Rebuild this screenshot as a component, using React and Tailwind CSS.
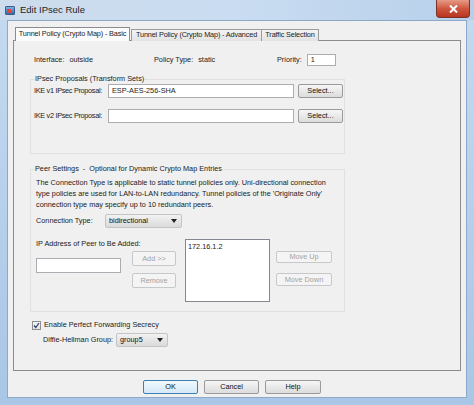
import React from "react";

function Btn({ children, w, h, disabled, def }) {
  return (
    <div
      className={
        "flex items-center justify-center rounded-[2px] border leading-none " +
        (disabled
          ? "border-[#c6c8ca] bg-[#f4f4f4] text-[#a3a3a3] "
          : def
          ? "border-[#3c7fb1] bg-gradient-to-b from-[#f1f8fd] to-[#d4e9f8] text-[#111] "
          : "border-[#9a9a9a] bg-gradient-to-b from-[#f6f6f6] to-[#dcdcdc] text-[#111] ")
      }
      style={{ width: w, height: h }}
    >
      {children}
    </div>
  );
}

function Combo({ w, text }) {
  return (
    <div
      className="flex h-[14px] items-center justify-between rounded-[2px] border border-[#c4c4c4] bg-gradient-to-b from-[#f2f2f2] to-[#dadada] pl-[3px] pr-[4px] text-[#111]"
      style={{ width: w }}
    >
      <span>{text}</span>
      <svg width="6" height="4" viewBox="0 0 6 4">
        <path d="M0 0h6L3 4z" fill="#222" />
      </svg>
    </div>
  );
}

export default function App() {
  return (
    <div className="flex h-[405px] w-[474px] flex-col overflow-hidden bg-gradient-to-b from-[#c5daf0] to-[#a9c6e6] font-['Liberation_Sans',Arial,sans-serif] text-[7.3px] text-[#1b1b1b]">
      {/* title bar */}
      <div className="flex h-[20px] shrink-0 items-start justify-between bg-gradient-to-r from-[#cddcec] via-[#c9dcf1] to-[#b7d0ea]">
        <div className="flex h-[20px] items-center pl-[5px]">
          <div className="mr-[5px] h-[9px] w-[10px] rounded-[1px] border border-[#3a5f8a] bg-gradient-to-b from-[#7fb0e0] to-[#2f6aa8]">
            <div className="ml-[1px] mt-[2px] h-[4px] w-[4px] bg-[#e0463a]" />
          </div>
          <span className="text-[9.5px] text-[#1e1e1e]">Edit IPsec Rule</span>
        </div>
        <div className="mr-[4px] flex h-[18px] w-[34px] items-center justify-center rounded-b-[4px] border border-t-0 border-[#7a3326] bg-gradient-to-b from-[#e49a86] via-[#d0563f] to-[#b83320]">
          <svg width="9" height="8" viewBox="0 0 9 8">
            <path d="M1 0.5 L8 7.5 M8 0.5 L1 7.5" stroke="#fff" strokeWidth="2" />
          </svg>
        </div>
      </div>

      {/* client */}
      <div className="mx-[7px] flex h-[378px] flex-col border border-[#8ea8c7] bg-[#f0f0f0] pl-[5px] pt-[6px]">
        {/* tabs */}
        <div className="relative z-10 ml-[2px] flex h-[14px] items-start tracking-[-0.15px]">
          <div className="flex h-[14px] w-[115px] items-center justify-center border border-b-0 border-[#8c8c8c] bg-[#fbfbfb] whitespace-nowrap">
            Tunnel Policy (Crypto Map) - Basic
          </div>
          <div className="mt-[2px] ml-[1px] flex h-[12px] w-[131px] items-center justify-center border border-b-0 border-[#9b9b9b] bg-gradient-to-b from-[#f3f3f3] to-[#e3e3e3] whitespace-nowrap">
            Tunnel Policy (Crypto Map) - Advanced
          </div>
          <div className="mt-[2px] flex h-[12px] w-[57px] items-center justify-center border border-b-0 border-l-0 border-[#9b9b9b] bg-gradient-to-b from-[#f3f3f3] to-[#e3e3e3] whitespace-nowrap">
            Traffic Selection
          </div>
        </div>

        {/* panel */}
        <div className="-mt-[1px] flex h-[331px] w-[448px] flex-col border border-[#8c8c8c] bg-[#f0f0f0] pt-[13px]">
          {/* row 1 */}
          <div className="flex h-[12px] items-center pl-[20px]">
            <div className="flex w-[120px] gap-[5px]">
              <span>Interface:</span>
              <span>outside</span>
            </div>
            <div className="flex w-[123px] gap-[5px]">
              <span>Policy Type:</span>
              <span>static</span>
            </div>
            <span>Priority:</span>
            <div className="ml-[5px] flex h-[12px] w-[29px] items-center border border-[#abadb3] bg-white pl-[3px]">1</div>
          </div>

          {/* group 1 */}
          <fieldset className="ml-[16px] mt-[8px] w-[315px] border border-[#e0e0e0] pb-[30px] pl-[3px]">
            <legend className="ml-[1px] h-[10px] leading-[10px]">IPsec Proposals (Transform Sets)</legend>
            <div className="flex h-[14px] items-center">
              <div className="w-[74px] whitespace-nowrap tracking-[-0.3px]">IKE v1 IPsec Proposal:</div>
              <div className="flex h-[14px] w-[186px] items-center border border-[#abadb3] bg-white pl-[3px]">ESP-AES-256-SHA</div>
              <div className="ml-[4px]">
                <Btn w={45} h={14}>Select...</Btn>
              </div>
            </div>
            <div className="mt-[11px] flex h-[14px] items-center">
              <div className="w-[74px] whitespace-nowrap tracking-[-0.3px]">IKE v2 IPsec Proposal:</div>
              <div className="h-[14px] w-[186px] border border-[#abadb3] bg-white" />
              <div className="ml-[4px]">
                <Btn w={45} h={14}>Select...</Btn>
              </div>
            </div>
          </fieldset>

          {/* group 2 */}
          <fieldset className="ml-[16px] mt-[10px] w-[315px] border border-[#e0e0e0] pb-[9px] pl-[5px]">
            <legend className="-ml-[1px] h-[10px] leading-[10px] whitespace-pre">Peer Settings  -  Optional for Dynamic Crypto Map Entries</legend>
            <div className="mt-[3px] whitespace-nowrap leading-[11px]">
              The Connection Type is applicable to static tunnel policies only. Uni-directional connection
              <br />
              type policies are used for LAN-to-LAN redundancy. Tunnel policies of the 'Originate Only'
              <br />
              connection type may specify up to 10 redundant peers.
            </div>
            <div className="mt-[4px] flex h-[14px] items-center">
              <div className="w-[69px]">Connection Type:</div>
              <Combo w={77} text="bidirectional" />
            </div>
            <div className="mt-[11px] flex items-start">
              <div className="flex w-[96px] flex-col">
                <div className="h-[10px] whitespace-nowrap leading-[10px]">IP Address of Peer to Be Added:</div>
                <div className="mt-[9px] h-[15px] w-[85px] border border-[#abadb3] bg-white" />
              </div>
              <div className="flex flex-col gap-[7px] pt-[12px]">
                <Btn w={44} h={15} disabled>Add &gt;&gt;</Btn>
                <Btn w={44} h={15} disabled>Remove</Btn>
              </div>
              <div className="ml-[9px] h-[63px] w-[85px] border border-[#828790] bg-white pl-[2px] pt-[2px]">172.16.1.2</div>
              <div className="ml-[6px] flex flex-col gap-[10px] pt-[12px]">
                <Btn w={56} h={12} disabled>Move Up</Btn>
                <Btn w={56} h={13} disabled>Move Down</Btn>
              </div>
            </div>
          </fieldset>

          {/* PFS */}
          <div className="ml-[18px] mt-[9px] flex h-[9px] items-center">
            <div className="flex h-[9px] w-[9px] items-center justify-center border border-[#8f8f8f] bg-gradient-to-b from-[#f4f4f4] to-[#e2e2e2]">
              <svg width="7" height="7" viewBox="0 0 7 7">
                <path d="M1 3.5 L2.8 5.5 L6 1" stroke="#2a3f6a" strokeWidth="1.2" fill="none" />
              </svg>
            </div>
            <span className="ml-[3px]">Enable Perfect Forwarding Secrecy</span>
          </div>
          <div className="ml-[29px] mt-[3px] flex h-[14px] items-center">
            <div className="w-[73px]">Diffie-Hellman Group:</div>
            <Combo w={52} text="group5" />
          </div>
        </div>

        {/* buttons */}
        <div className="mt-[9px] flex justify-center gap-[6px] pr-[15px]">
          <Btn w={55} h={14} def>OK</Btn>
          <Btn w={55} h={14}>Cancel</Btn>
          <Btn w={56} h={14}>Help</Btn>
        </div>
      </div>
    </div>
  );
}
